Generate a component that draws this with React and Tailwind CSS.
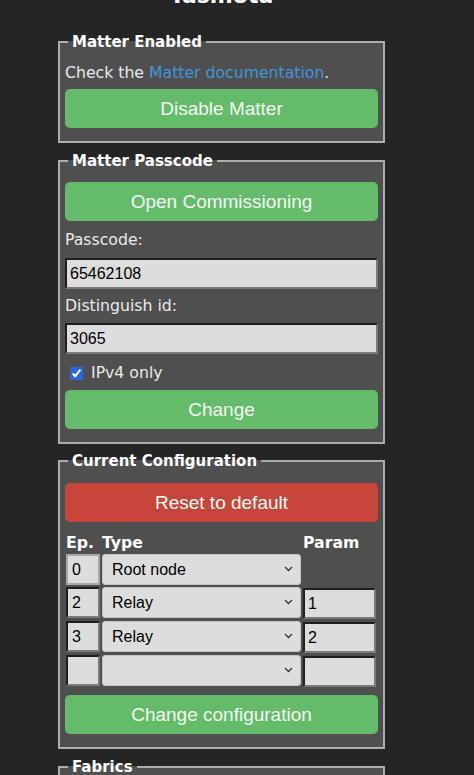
import React from 'react';

const BTN =
  "block w-full h-[39px] rounded-[5px] text-[19px] leading-[39px] text-[#f4faf4] font-['Liberation_Sans',Arial,sans-serif] text-center";

const INPUT =
  "block w-full h-[31px] bg-[#dddddd] text-black text-[16px] px-[3px] font-['Liberation_Sans',Arial,sans-serif] border-2 border-t-[#1e1e1e] border-l-[#1e1e1e] border-r-[#7a7a7a] border-b-[#7a7a7a] outline-none";

function Box({ title, className = '', children }) {
  return (
    <fieldset className={`border-2 border-[#adadad] bg-[#4f4f4f] px-[5px] pt-[11px] pb-[13px] ${className}`}>
      <legend className="ml-[3px] px-1 text-[15px] font-bold leading-5 text-white">{title}</legend>
      {children}
    </fieldset>
  );
}

function Chevron() {
  return (
    <svg className="pointer-events-none absolute right-[8px] top-[12px] h-[6px] w-[9px]" viewBox="0 0 9 6" fill="none" stroke="#333" strokeWidth="1.3">
      <path d="M1 1l3.5 3.5L8 1" />
    </svg>
  );
}

function Row({ ep, type, param, first }) {
  return (
    <div className="flex gap-[2px] pl-[1px]">
      <input
        readOnly
        value={ep}
        className={`w-[34px] h-[31px] bg-[#dddddd] text-black text-[16px] px-[4px] font-['Liberation_Sans',Arial,sans-serif] border-2 outline-none ${
          first
            ? 'border-[#a8a8a8]'
            : 'border-t-[#1e1e1e] border-l-[#1e1e1e] border-r-[#7a7a7a] border-b-[#7a7a7a]'
        }`}
      />
      <div className="relative w-[199px]">
        <select
          value={type}
          onChange={() => {}}
          className="appearance-none w-full h-[31px] bg-[#dddddd] text-black text-[16px] pl-[9px] rounded-[3px] border border-[#c4c4c4] font-['Liberation_Sans',Arial,sans-serif] outline-none"
        >
          <option value="">{''}</option>
          <option value="Root node">Root node</option>
          <option value="Relay">Relay</option>
        </select>
        <Chevron />
      </div>
      {first ? (
        <div className="w-[73px]" />
      ) : (
        <input readOnly value={param} className={`${INPUT} !w-[73px] h-[28px] mt-[1px]`} />
      )}
    </div>
  );
}

export default function App() {
  return (
    <div className="min-h-screen overflow-hidden bg-[#252525] text-[#eaeaea] font-['DejaVu_Sans',Verdana,sans-serif] text-[15.7px]">
      <div className="ml-[58px] w-[327px]">
        <h2 className="-mt-[18px] text-center text-[22px] font-bold leading-7 text-white">Tasmota</h2>

        <Box title="Matter Enabled" className="mt-[22px]">
          <p className="leading-5">
            Check the <a className="text-[#4195db]">Matter documentation</a>.
          </p>
          <button className={`${BTN} mt-[6px] bg-[#64bc6a]`}>Disable Matter</button>
        </Box>

        <Box title="Matter Passcode" className="mt-2">
          <button className={`${BTN} bg-[#64bc6a]`}>Open Commissioning</button>
          <p className="mt-[9px] leading-5">Passcode:</p>
          <input readOnly value="65462108" className={`${INPUT} mt-2`} />
          <p className="mt-[7px] leading-5">Distinguish id:</p>
          <input readOnly value="3065" className={`${INPUT} mt-[7px]`} />
          <label className="mt-[9px] flex h-5 items-center gap-[8px] pl-[5px]">
            <input type="checkbox" checked readOnly className="h-[13px] w-[13px] accent-[#2a66dc]" />
            <span>IPv4 only</span>
          </label>
          <button className={`${BTN} mt-[7px] bg-[#64bc6a]`}>Change</button>
        </Box>

        <Box title="Current Configuration" className="mt-[7px]">
          <button className={`${BTN} mt-[1px] h-[38px] leading-[38px] bg-[#c8453c]`}>Reset to default</button>
          <div className="mt-[11px] flex gap-[2px] pl-[1px] font-bold leading-5 text-white">
            <span className="w-[34px]">Ep.</span>
            <span className="w-[199px]">Type</span>
            <span className="w-[73px]">Param</span>
          </div>
          <div className="mt-[1px] flex flex-col gap-[2px]">
            <Row ep="0" type="Root node" first />
            <Row ep="2" type="Relay" param="1" />
            <Row ep="3" type="Relay" param="2" />
            <Row ep="" type="" param="" />
          </div>
          <button className={`${BTN} mt-[8px] bg-[#64bc6a]`}>Change configuration</button>
        </Box>

        <Box title="Fabrics" className="mt-2">
          <p className="leading-5">No fabrics configured.</p>
          <button className={`${BTN} mt-[6px] bg-[#64bc6a]`}>Delete Fabric</button>
        </Box>
      </div>
    </div>
  );
}
